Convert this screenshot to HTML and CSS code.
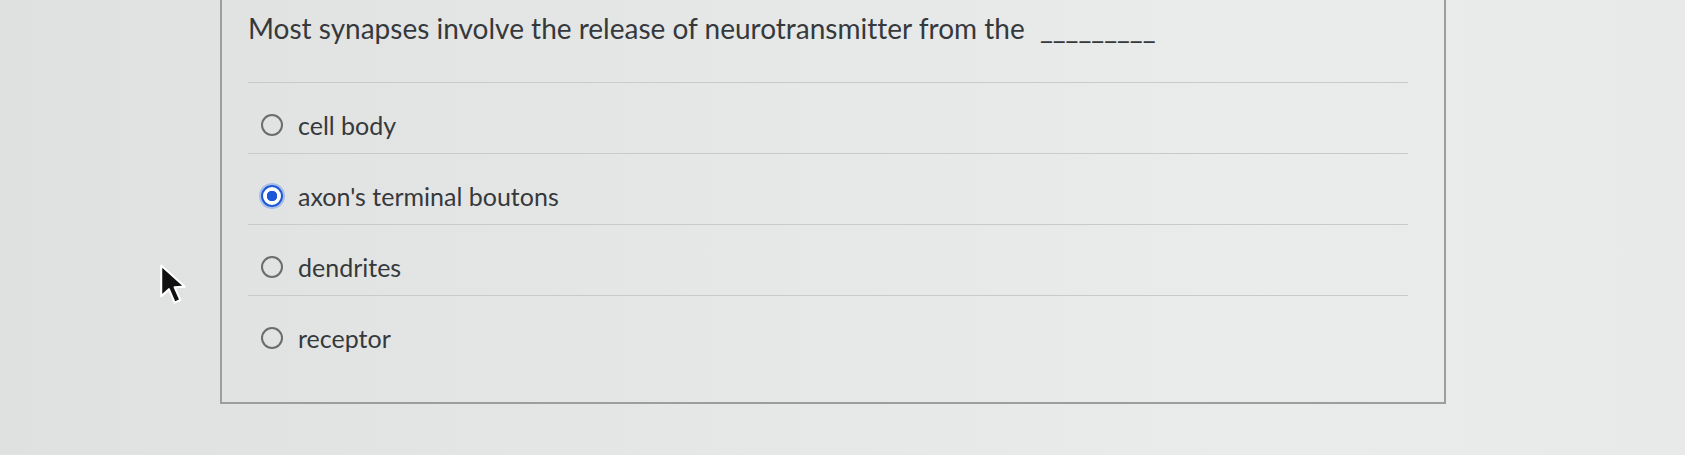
FILE: index.html
```html
<!DOCTYPE html>
<html lang="en">
<head>
    <meta charset="UTF-8">
    <meta name="viewport" content="width=device-width, initial-scale=1.0">
    <title>Quiz Question</title>
    <link rel="stylesheet" href="styles.css">
</head>
<body>
    <div class="question">
        <div class="question-text">
            Most synapses involve the release of neurotransmitter from the <span class="blank">_________</span>
        </div>

        <div class="answers">
            <label class="answer">
                <span class="radio"></span>
                <span class="answer-text">cell body</span>
            </label>
            <label class="answer">
                <span class="radio checked"></span>
                <span class="answer-text">axon's terminal boutons</span>
            </label>
            <label class="answer">
                <span class="radio"></span>
                <span class="answer-text">dendrites</span>
            </label>
            <label class="answer">
                <span class="radio"></span>
                <span class="answer-text">receptor</span>
            </label>
        </div>
    </div>

    <!-- mouse pointer -->
    <svg class="pointer" width="34" height="46" viewBox="0 0 26 36">
        <path d="M3 2 L3 26 L9 20.5 L13.5 31 L18 29 L13.5 19 L21.5 18.5 Z" fill="#111" stroke="#fff" stroke-width="1.6" stroke-linejoin="round"/>
    </svg>
</body>
</html>
```

FILE: styles.css
```css
:root {
    --text-color: #36393c;
    --line-color: #c9cbca;
    --border-color: #9c9e9e;
    --radio-border: #6a6d6f;
    --checked-color: #1c58d8;
}

* {
    margin: 0;
    padding: 0;
    box-sizing: border-box;
}

body {
    font-family: 'Lato', 'Liberation Sans', sans-serif;
    font-variant-ligatures: none;
    color: var(--text-color);
    background: linear-gradient(90deg, #dfe1e0 0%, #e5e7e6 40%, #eaeceb 75%, #e8eae9 100%);
    height: 455px;
    overflow: hidden;
    position: relative;
}

.question {
    margin: -2px 0 0 220px;
    width: 1226px;
    height: 406px;
    border: 2px solid var(--border-color);
    padding: 11px 36px 0 26px;
}

.question-text {
    font-size: 28px;
    line-height: 34px;
    padding-bottom: 37px;
    border-bottom: 1px solid var(--line-color);
}

.blank {
    margin-left: 8px;
}

.answer {
    display: flex;
    align-items: center;
    gap: 15px;
    padding: 31px 0 17px;
    font-size: 25px;
    line-height: 22px;
    border-bottom: 1px solid var(--line-color);
}

.answer:last-child {
    border-bottom: none;
}

.radio {
    width: 22px;
    height: 22px;
    margin-left: 13px;
    border: 2px solid var(--radio-border);
    border-radius: 50%;
    flex-shrink: 0;
}

.radio.checked {
    border-color: var(--checked-color);
    background: radial-gradient(circle, var(--checked-color) 0 5px, #fff 5.5px);
    box-shadow: 0 0 0 2px #a8bfeb;
}

.pointer {
    position: absolute;
    left: 157px;
    top: 263px;
}
```
